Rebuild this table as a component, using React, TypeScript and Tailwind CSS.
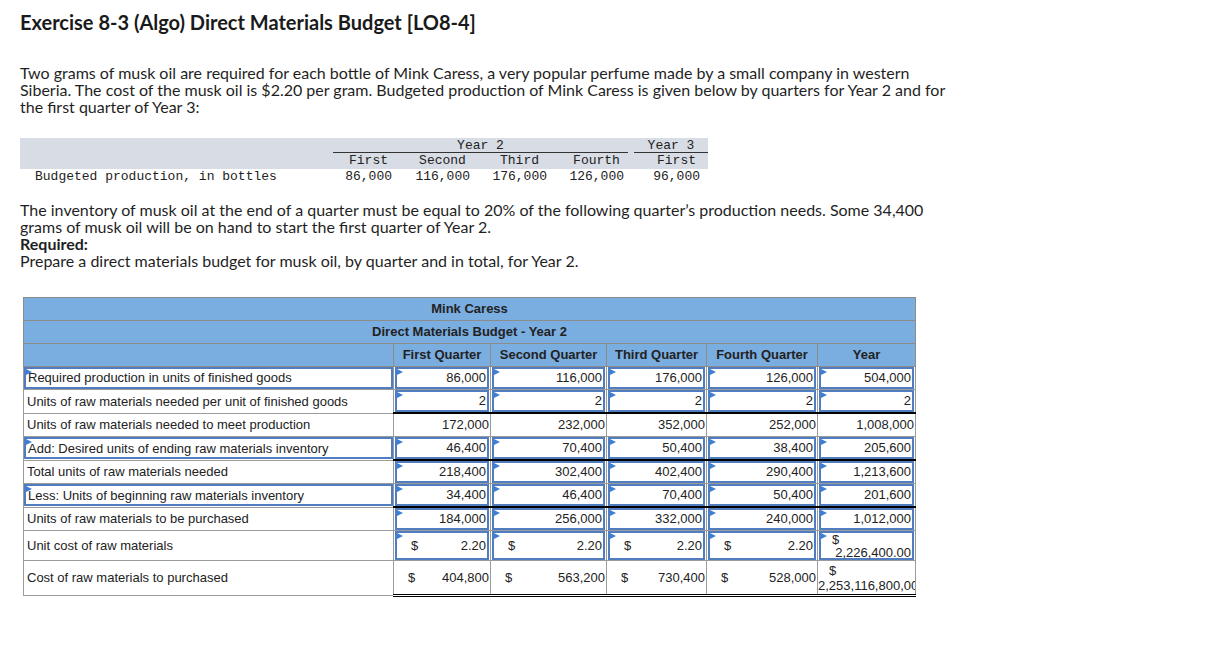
import React from 'react'

type Row = {
  label: string
  labelInput?: boolean
  vals: string[]
  inputs?: boolean
  dollar?: boolean
  line?: 'single' | 'double'
  h: string
}

const rows: Row[] = [
  { label: 'Required production in units of finished goods', labelInput: true, vals: ['86,000', '116,000', '176,000', '126,000', '504,000'], inputs: true, h: 'h-[22px]' },
  { label: 'Units of raw materials needed per unit of finished goods', vals: ['2', '2', '2', '2', '2'], inputs: true, line: 'single', h: 'h-[22px]' },
  { label: 'Units of raw materials needed to meet production', vals: ['172,000', '232,000', '352,000', '252,000', '1,008,000'], h: 'h-[22px]' },
  { label: 'Add: Desired units of ending raw materials inventory', labelInput: true, vals: ['46,400', '70,400', '50,400', '38,400', '205,600'], inputs: true, line: 'single', h: 'h-[22px]' },
  { label: 'Total units of raw materials needed', vals: ['218,400', '302,400', '402,400', '290,400', '1,213,600'], inputs: true, h: 'h-[22px]' },
  { label: 'Less: Units of beginning raw materials inventory', labelInput: true, vals: ['34,400', '46,400', '70,400', '50,400', '201,600'], inputs: true, line: 'single', h: 'h-[22px]' },
  { label: 'Units of raw materials to be purchased', vals: ['184,000', '256,000', '332,000', '240,000', '1,012,000'], inputs: true, h: 'h-[22px]' },
  { label: 'Unit cost of raw materials', vals: ['2.20', '2.20', '2.20', '2.20', '2,226,400.00'], inputs: true, dollar: true, h: 'h-[29px]' },
  { label: 'Cost of raw materials to purchased', vals: ['404,800', '563,200', '730,400', '528,000', '2,253,116,800,00'], dollar: true, line: 'double', h: 'h-[33px]' },
]

const Flag = () => (
  <span className="absolute left-0 top-0 h-0 w-0 border-y-[3px] border-l-[6px] border-y-transparent border-l-[#3b7fd4]" />
)

const InputBox = ({ children, className = '' }: { children: React.ReactNode; className?: string }) => (
  <div className={`relative border-2 border-[#4f7dbf] bg-white ${className}`}>
    <Flag />
    {children}
  </div>
)

const lineClass = (line?: 'single' | 'double') =>
  line === 'single' ? 'border-b-2 border-b-black' : line === 'double' ? 'border-b-[3px] border-b-black border-double' : ''

const ValueCell = ({ row, v, last }: { row: Row; v: string; last: boolean }) => {
  let content: React.ReactNode
  if (row.dollar && last) {
    content = (
      <div className={`flex h-full flex-col justify-center ${row.inputs ? 'leading-[13px]' : 'leading-[15px]'}`}>
        <div className="pl-[11px]">$</div>
        <div className={row.inputs ? 'pr-[1px] text-right' : 'whitespace-nowrap'}>{v}</div>
      </div>
    )
  } else if (row.dollar) {
    content = (
      <div className="flex h-full items-center justify-between pl-[14px] pr-[1px]">
        <span>$</span>
        <span>{v}</span>
      </div>
    )
  } else {
    content = <div className="flex h-full items-center justify-end pr-[1px]">{v}</div>
  }
  return (
    <td className={`overflow-hidden border border-[#9b9b9b] p-0 ${lineClass(row.line)}`}>
      {row.inputs ? (
        <InputBox className={`mx-px ${row.h}`}>{content}</InputBox>
      ) : (
        <div className={row.h}>{content}</div>
      )}
    </td>
  )
}

const BudgetTable = () => (
  <table className="w-[892px] table-fixed border-collapse border border-[#8c8c8c] font-['Liberation_Sans',Arial,sans-serif] text-[13px] text-[#222]">
    <colgroup>
      <col className="w-[370px]" />
      <col className="w-[97px]" />
      <col className="w-[116px]" />
      <col className="w-[100px]" />
      <col className="w-[111px]" />
      <col className="w-[98px]" />
    </colgroup>
    <thead>
      <tr className="bg-[#7aade0]">
        <th colSpan={6} className="border border-[#8c8c8c] p-0 font-bold">
          <div className="flex h-[22px] items-center justify-center">Mink Caress</div>
        </th>
      </tr>
      <tr className="bg-[#7aade0]">
        <th colSpan={6} className="border border-[#8c8c8c] p-0 font-bold">
          <div className="flex h-[22px] items-center justify-center">Direct Materials Budget - Year 2</div>
        </th>
      </tr>
      <tr className="bg-[#7aade0]">
        <th className="border border-[#8c8c8c] p-0">
          <div className="h-[22px]"></div>
        </th>
        {['First Quarter', 'Second Quarter', 'Third Quarter', 'Fourth Quarter', 'Year'].map((h) => (
          <th key={h} className="border border-[#8c8c8c] p-0 font-bold">
            <div className="flex h-[22px] items-center justify-center">{h}</div>
          </th>
        ))}
      </tr>
    </thead>
    <tbody>
      {rows.map((r) => (
        <tr key={r.label}>
          <td className="overflow-hidden border border-[#9b9b9b] p-0">
            {r.labelInput ? (
              <InputBox className={`flex items-center pl-[2px] ${r.h}`}>{r.label}</InputBox>
            ) : (
              <div className={`flex items-center pl-[3px] ${r.h}`}>{r.label}</div>
            )}
          </td>
          {r.vals.map((v, i) => (
            <ValueCell key={i} row={r} v={v} last={i === 4} />
          ))}
        </tr>
      ))}
    </tbody>
  </table>
)

const ProductionTable = () => (
  <table className="w-[688px] table-fixed border-collapse font-['Liberation_Mono',monospace] text-[13px] text-[#222]">
    <colgroup>
      <col className="w-[310px]" />
      <col className="w-[70px]" />
      <col className="w-[78px]" />
      <col className="w-[77px]" />
      <col className="w-[77px]" />
      <col className="w-[76px]" />
    </colgroup>
    <tbody>
      <tr className="bg-[#d8dce4]">
        <td className="p-0"></td>
        <td colSpan={4} className="p-0 pl-[3px] pr-[4px]">
          <div className="h-[15px] border-b border-[#333] text-center leading-[15px]">Year 2</div>
        </td>
        <td className="p-0 pl-[2px]">
          <div className="h-[15px] border-b border-[#333] text-center leading-[15px]">Year 3</div>
        </td>
      </tr>
      <tr className="bg-[#d8dce4] leading-[16px]">
        <td className="p-0"></td>
        <td className="p-0 pr-[8px] text-right"><span className="inline-block w-[47px] text-center">First</span></td>
        <td className="p-0 pr-[8px] text-right"><span className="inline-block w-[55px] text-center">Second</span></td>
        <td className="p-0 pr-[8px] text-right"><span className="inline-block w-[55px] text-center">Third</span></td>
        <td className="p-0 pr-[8px] text-right"><span className="inline-block w-[55px] text-center">Fourth</span></td>
        <td className="p-0 pr-[8px] text-right"><span className="inline-block w-[47px] text-center">First</span></td>
      </tr>
      <tr className="leading-[16px]">
        <td className="p-0 pl-[15px]">Budgeted production, in bottles</td>
        {['86,000', '116,000', '176,000', '126,000', '96,000'].map((v) => (
          <td key={v} className="p-0 pr-[8px] text-right">{v}</td>
        ))}
      </tr>
    </tbody>
  </table>
)

export default function App() {
  return (
    <div className="min-h-screen bg-white pl-[20px] font-['Lato',sans-serif] text-[#1f1f1f]">
      <h1 className="pt-[10px] text-[20px] font-bold leading-[24px] text-[#1a1a1a]">
        Exercise 8-3 (Algo) Direct Materials Budget [LO8-4]
      </h1>
      <p className="mt-[30px] w-[1000px] text-[16px] leading-[17px]">
        Two grams of musk oil are required for each bottle of Mink Caress, a very popular perfume made by a small company in western
        <br />
        Siberia. The cost of the musk oil is $2.20 per gram. Budgeted production of Mink Caress is given below by quarters for Year 2 and for
        <br />
        the first quarter of Year 3:
      </p>
      <div className="mt-[23px]">
        <ProductionTable />
      </div>
      <div className="mt-[16px] w-[1000px] text-[16px] leading-[17px]">
        <p>
          The inventory of musk oil at the end of a quarter must be equal to 20% of the following quarter’s production needs. Some 34,400
          <br />
          grams of musk oil will be on hand to start the first quarter of Year 2.
        </p>
        <p className="font-bold">Required:</p>
        <p>Prepare a direct materials budget for musk oil, by quarter and in total, for Year 2.</p>
      </div>
      <div className="mt-[28px] pl-[3px]">
        <BudgetTable />
      </div>
    </div>
  )
}
